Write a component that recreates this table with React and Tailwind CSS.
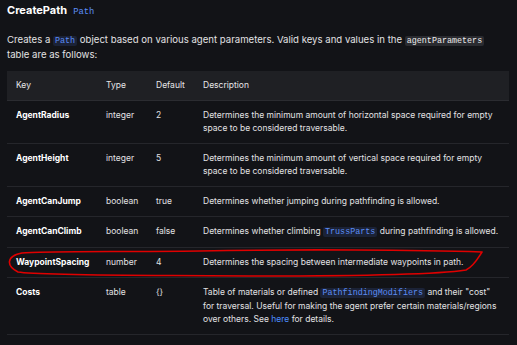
import React from "react";

const rows = [
  {
    key: "AgentRadius",
    type: "integer",
    def: "2",
    desc: <>Determines the minimum amount of horizontal space required for empty space to be considered traversable.</>,
  },
  {
    key: "AgentHeight",
    type: "integer",
    def: "5",
    desc: <>Determines the minimum amount of vertical space required for empty space to be considered traversable.</>,
  },
  {
    key: "AgentCanJump",
    type: "boolean",
    def: "true",
    desc: <>Determines whether jumping during pathfinding is allowed.</>,
  },
  {
    key: "AgentCanClimb",
    type: "boolean",
    def: "false",
    desc: (
      <>
        Determines whether climbing <Code blue>TrussParts</Code> during pathfinding is allowed.
      </>
    ),
  },
  {
    key: "WaypointSpacing",
    type: "number",
    def: "4",
    desc: <>Determines the spacing between intermediate waypoints in path.</>,
  },
  {
    key: "Costs",
    type: "table",
    def: "{}",
    desc: (
      <>
        Table of materials or defined <Code blue>PathfindingModifiers</Code> and their "cost" for traversal. Useful for
        making the agent prefer certain materials/regions over others. See{" "}
        <span className="text-[#4c8dff]">here</span> for details.
      </>
    ),
  },
];

function Code({ children, blue }) {
  return (
    <code
      className={`rounded-[2px] px-[2px] font-['Liberation_Mono',monospace] text-[8.4px] ${
        blue ? "bg-[#1b2236] text-[#5b8df5]" : "bg-[#2a2b30] text-[#ececec]"
      }`}
    >
      {children}
    </code>
  );
}

function Ring() {
  // hand drawn red loop around the WaypointSpacing row
  return (
    <svg className="pointer-events-none absolute left-0 top-0" width="517" height="345" viewBox="0 0 517 345">
      <path
        d="M482 252 C420 250 300 249 200 251 C120 252 40 251 22 253 C6 256 6 266 18 272 C40 276 150 275 260 276 C360 276 440 274 466 270 C474 266 478 258 482 252"
        fill="none"
        stroke="#e00000"
        strokeWidth="1.6"
        strokeLinecap="round"
      />
    </svg>
  );
}

export default function App() {
  return (
    <div className="relative h-[345px] w-[517px] overflow-hidden bg-[#121317] px-[7px] pt-[2px] font-['Inter',sans-serif] text-[9.6px] leading-[13px] text-[#e2e2e4]">
      <div className="flex items-baseline gap-[6px]">
        <h2 className="text-[11px] font-bold leading-[16px] text-white">CreatePath</h2>
        <span className="font-['Liberation_Mono',monospace] text-[8.8px] text-[#5b8df5]">Path</span>
      </div>

      <p className="mt-[14px] pr-[20px] leading-[14px]">
        Creates a <Code blue>Path</Code> object based on various agent parameters. Valid keys and values in the{" "}
        <Code>agentParameters</Code> table are as follows:
      </p>

      <div className="mt-[9px] w-[502px] text-[8.5px]">
        <div className="grid grid-cols-[90px_50px_47px_1fr] border-b border-[#2b2c31] bg-[#1f2024] text-[#e6e6e8]">
          <div className="px-[9px] py-2">Key</div>
          <div className="px-[9px] py-2">Type</div>
          <div className="px-[9px] py-2">Default</div>
          <div className="px-[9px] py-2">Description</div>
        </div>
        {rows.map((r) => (
          <div key={r.key} className="grid grid-cols-[90px_50px_47px_1fr] border-b border-[#25262b]">
            <div className="px-[9px] py-2 font-bold text-white">{r.key}</div>
            <div className="px-[9px] py-2">{r.type}</div>
            <div className="px-[9px] py-2">{r.def}</div>
            <div className="py-2 pl-[9px] pr-[6px]">{r.desc}</div>
          </div>
        ))}
      </div>

      <Ring />
    </div>
  );
}
